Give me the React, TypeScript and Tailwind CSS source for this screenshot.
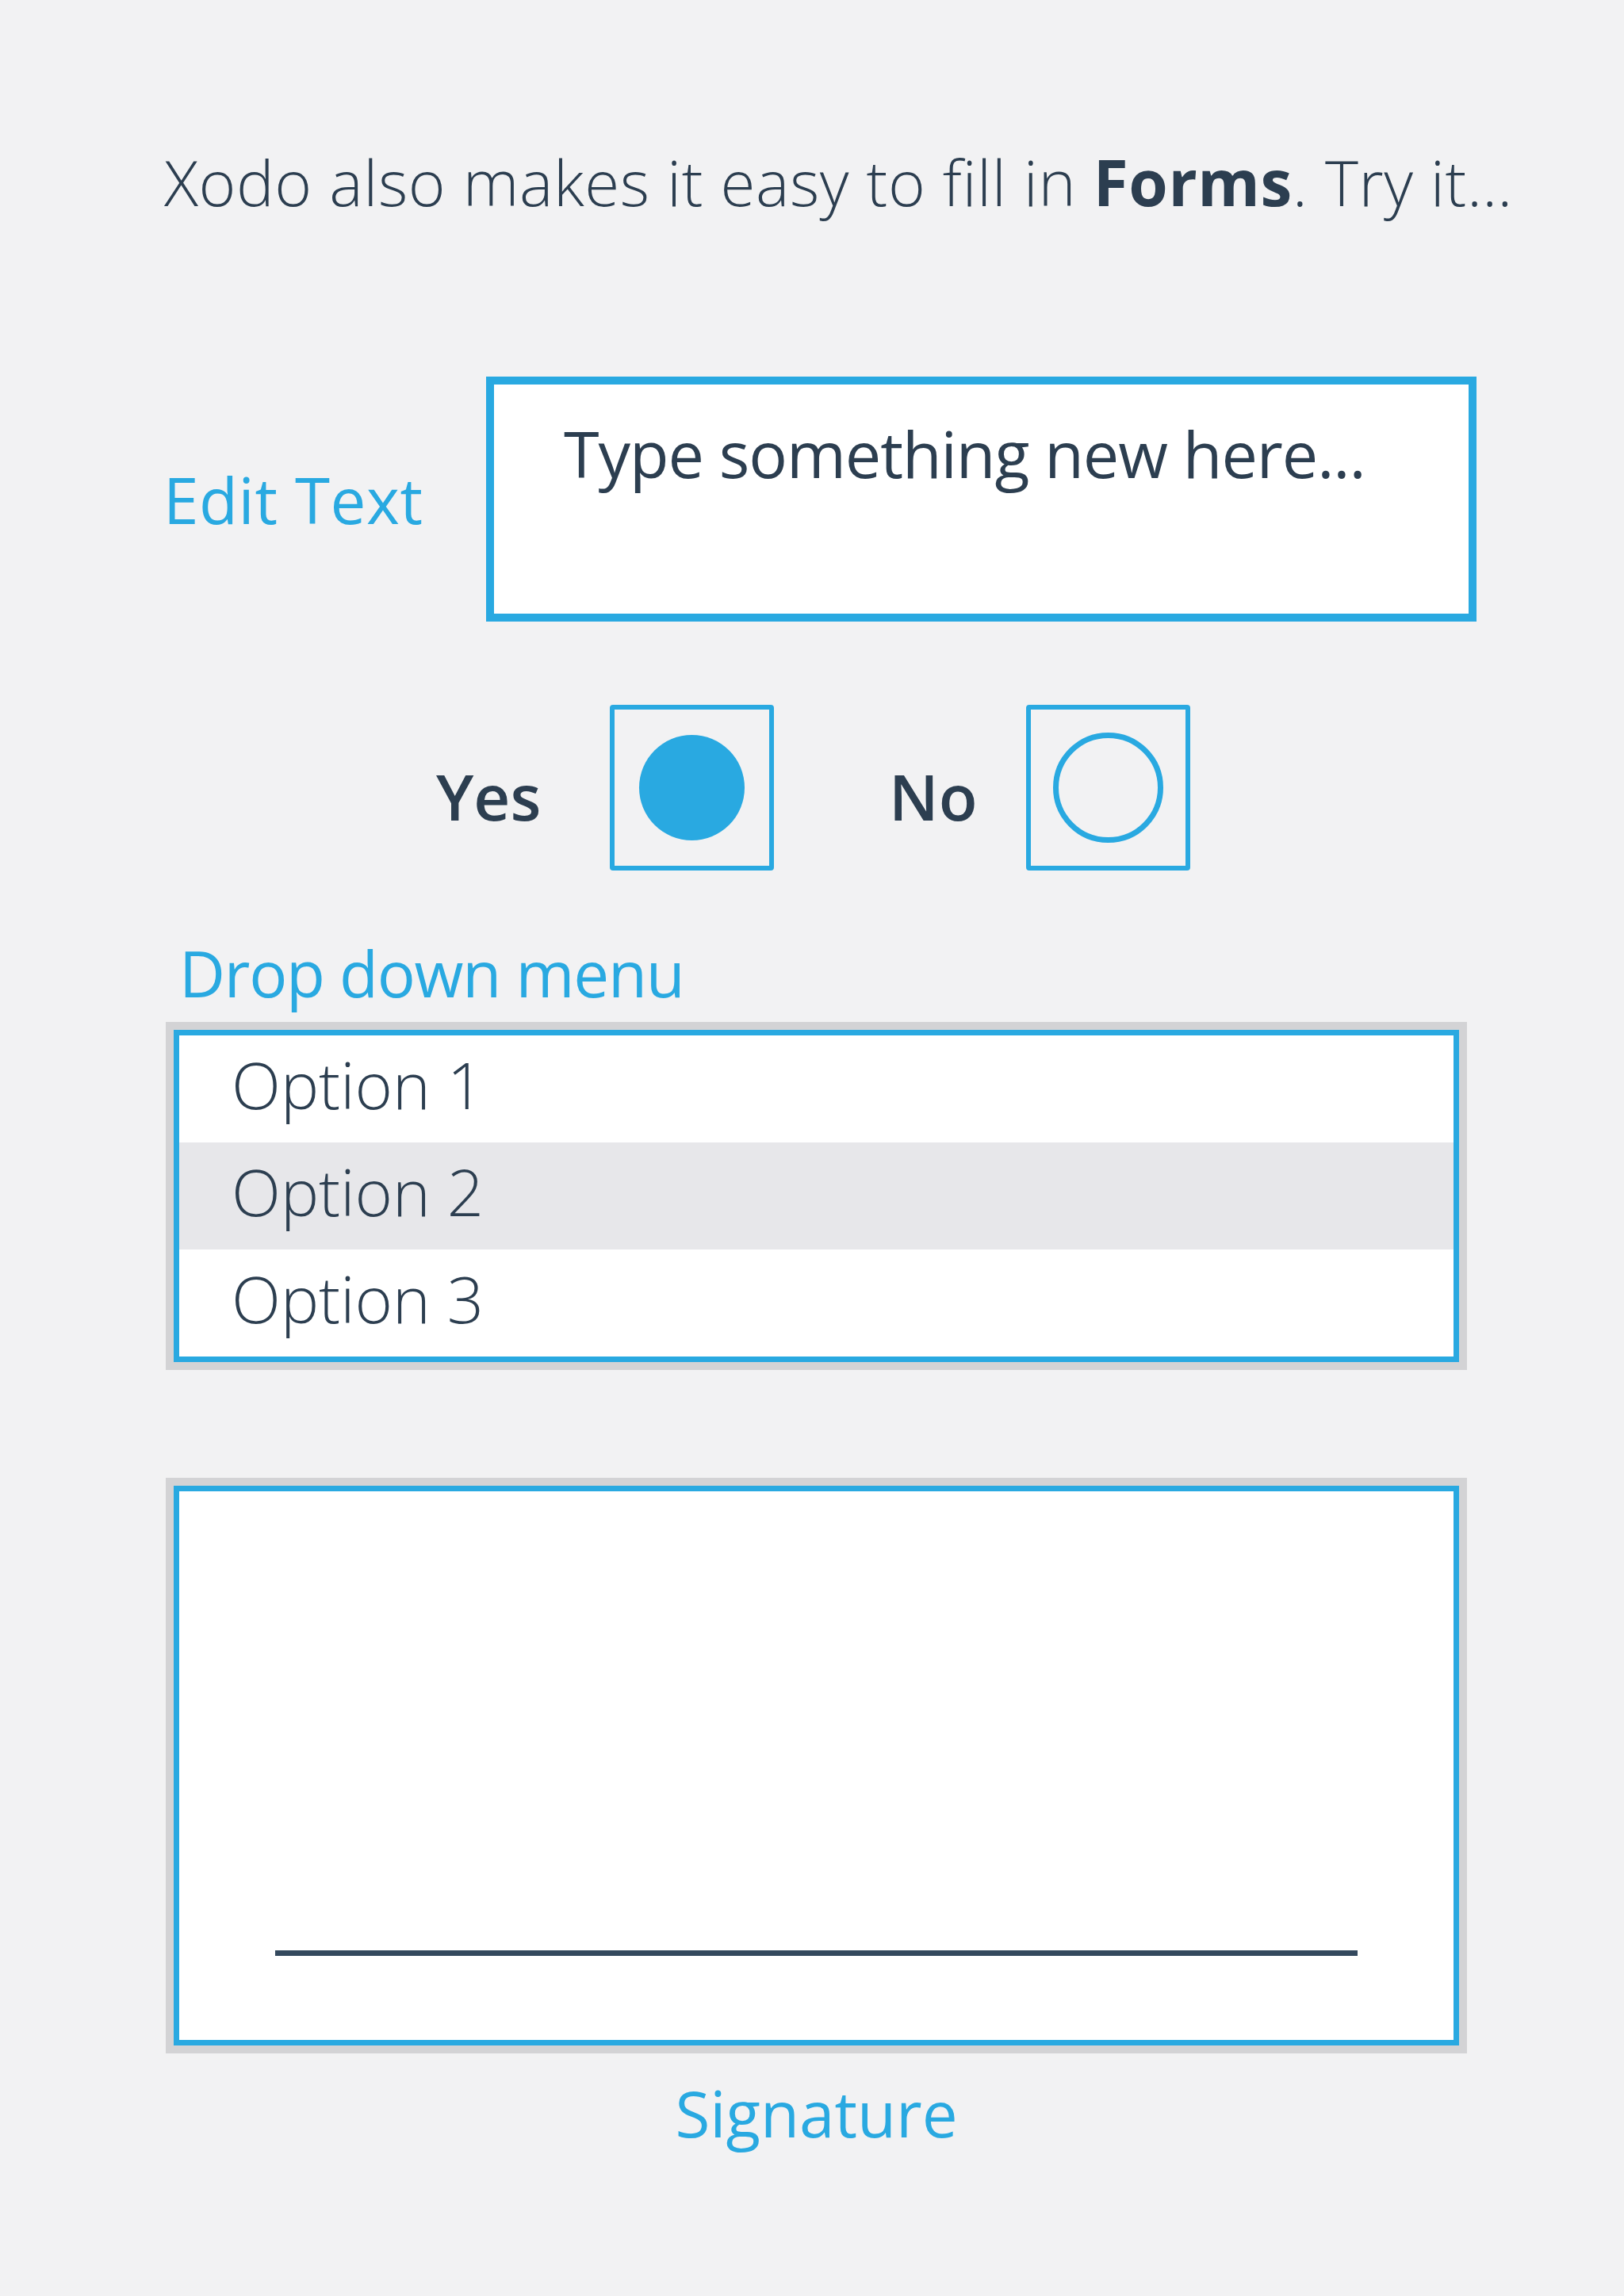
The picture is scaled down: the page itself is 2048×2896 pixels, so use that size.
const blue = "text-[#29a9e1]";

function Radio({ checked }: { checked: boolean }) {
  return (
    <div className="flex h-[209px] w-[207px] items-center justify-center rounded-[4px] border-[6px] border-[#29a9e1]">
      {checked ? (
        <div className="h-[133px] w-[133px] rounded-full bg-[#29a9e1]" />
      ) : (
        <div className="h-[139px] w-[139px] rounded-full border-[7px] border-[#29a9e1]" />
      )}
    </div>
  );
}

const options = ["Option 1", "Option 2", "Option 3"];

export default function App() {
  return (
    <div className="h-[2896px] w-[2048px] overflow-hidden bg-[#f2f2f3] font-['Open_Sans','Noto_Sans',sans-serif] text-[#2c3e50]">
      <p className="pl-[207px] pt-[189px] text-[80px] font-light leading-[80px] tracking-[0.6px] whitespace-nowrap">
        Xodo also makes it easy to fill in <span className="font-bold">Forms</span>. Try it…
      </p>

      <div className="mt-[206px] flex items-center pl-[206px]">
        <div className={`w-[407px] text-[80px] leading-[80px] tracking-[0.6px] ${blue}`}>Edit Text</div>
        <div className="h-[309px] w-[1249px] border-[10px] border-[#29a9e1] bg-white pl-[88px] pt-[46px] text-[81px] leading-[81px] tracking-[-1.1px] whitespace-nowrap">
          Type something new here...
        </div>
      </div>

      <div className="mt-[105px] flex items-center pl-[550px]">
        <div className="mt-[20px] w-[219px] text-[80px] font-semibold leading-[80px]">Yes</div>
        <Radio checked />
        <div className="ml-[145px] mt-[20px] w-[173px] text-[80px] font-semibold leading-[80px]">No</div>
        <Radio checked={false} />
      </div>

      <div className={`mt-[89px] pl-[226px] text-[80px] leading-[80px] tracking-[-1.3px] ${blue}`}>Drop down menu</div>

      <div className="ml-[209px] mt-[22px] w-[1641px] border-[10px] border-[#d3d3d5]">
        <div className="border-[7px] border-[#29a9e1] bg-white">
          {options.map((o, i) => (
            <div
              key={o}
              className={`flex h-[135px] items-center pb-[12px] pl-[66px] text-[81px] font-light leading-[81px] ${
                i === 1 ? "bg-[#e7e7ea]" : ""
              }`}
            >
              {o}
            </div>
          ))}
        </div>
      </div>

      <div className="ml-[209px] mt-[136px] h-[726px] w-[1641px] border-[10px] border-[#d3d3d5]">
        <div className="flex h-full flex-col justify-end border-[7px] border-[#29a9e1] bg-white">
          <div className="mx-[121px] mb-[106px] h-[7px] bg-[#34495e]" />
        </div>
      </div>

      <div className={`ml-[209px] mt-[35px] w-[1641px] text-center text-[80px] leading-[80px] ${blue}`}>Signature</div>
    </div>
  );
}
